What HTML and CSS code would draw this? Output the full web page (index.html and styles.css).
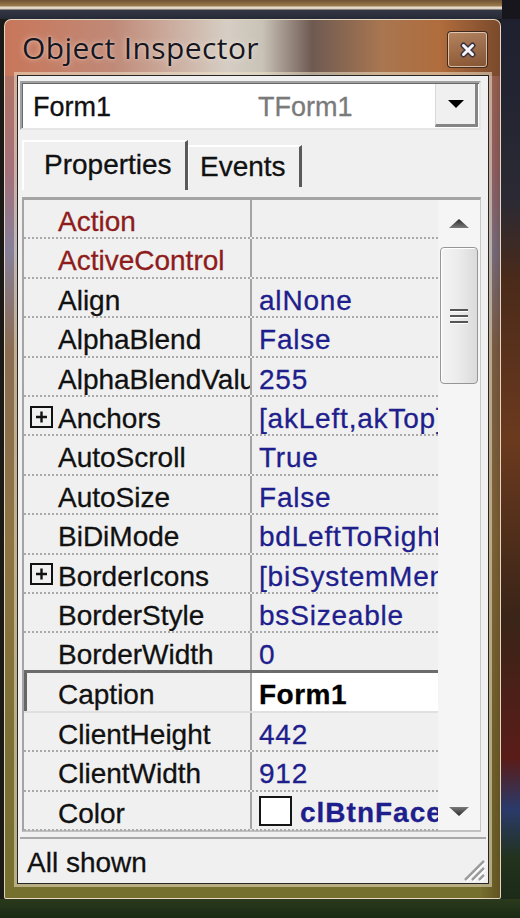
FILE: index.html
```html
<!DOCTYPE html>
<html lang="en">
<head>
<meta charset="utf-8">
<title>Object Inspector</title>
<link rel="stylesheet" href="styles.css">
</head>
<body>
<div class="screen">
  <div class="upper"><div class="upper-win"></div></div>
  <div class="main">
    <div class="window">
      <div class="titlebar">
        <span class="title">Object Inspector</span>
        <button class="close" aria-label="Close">
          <svg width="18" height="16" viewBox="0 0 18 16"><path d="M4.5 3.5 L13.5 12.5 M13.5 3.5 L4.5 12.5" stroke="#3b3440" stroke-width="6" stroke-linecap="round"/><path d="M4.5 3.5 L13.5 12.5 M13.5 3.5 L4.5 12.5" stroke="#f6f6fa" stroke-width="3" stroke-linecap="round"/></svg>
        </button>
      </div>
      <div class="client">
        <div class="combo">
          <span class="combo-name">Form1</span>
          <span class="combo-type">TForm1</span>
          <span class="combo-btn"><svg width="16" height="8" viewBox="0 0 16 8"><polygon points="0,0 16,0 8,8" fill="#000"/></svg></span>
        </div>
        <div class="tabs">
          <div class="tab active">Properties</div>
          <div class="tab">Events</div>
        </div>
        <div class="grid">
          <div class="rows">
            <div class="row"><div class="name ref">Action</div><div class="val"></div></div>
            <div class="row"><div class="name ref">ActiveControl</div><div class="val"></div></div>
            <div class="row"><div class="name">Align</div><div class="val">alNone</div></div>
            <div class="row"><div class="name">AlphaBlend</div><div class="val">False</div></div>
            <div class="row"><div class="name">AlphaBlendValue</div><div class="val">255</div></div>
            <div class="row"><div class="name has-plus"><svg class="plus" width="23" height="22" viewBox="0 0 23 22"><rect x="1" y="1" width="21" height="20" fill="none" stroke="#111" stroke-width="2"/><path d="M6 11 H17 M11.5 5.5 V16.5" stroke="#111" stroke-width="2.4"/></svg>Anchors</div><div class="val">[akLeft,akTop]</div></div>
            <div class="row"><div class="name">AutoScroll</div><div class="val">True</div></div>
            <div class="row"><div class="name">AutoSize</div><div class="val">False</div></div>
            <div class="row"><div class="name">BiDiMode</div><div class="val">bdLeftToRight</div></div>
            <div class="row"><div class="name has-plus"><svg class="plus" width="23" height="22" viewBox="0 0 23 22"><rect x="1" y="1" width="21" height="20" fill="none" stroke="#111" stroke-width="2"/><path d="M6 11 H17 M11.5 5.5 V16.5" stroke="#111" stroke-width="2.4"/></svg>BorderIcons</div><div class="val">[biSystemMenu,biMinimize,biMaximize]</div></div>
            <div class="row"><div class="name">BorderStyle</div><div class="val">bsSizeable</div></div>
            <div class="row pre-sel"><div class="name">BorderWidth</div><div class="val">0</div></div>
            <div class="row sel"><div class="name">Caption</div><div class="val">Form1</div></div>
            <div class="row"><div class="name">ClientHeight</div><div class="val">442</div></div>
            <div class="row"><div class="name">ClientWidth</div><div class="val">912</div></div>
            <div class="row"><div class="name">Color</div><div class="val color-val"><span class="swatch"></span><b>clBtnFace</b></div></div>
          </div>
          <div class="scrollbar">
            <div class="sb-btn"><svg width="20" height="9" viewBox="0 0 20 9"><defs><linearGradient id="ga" x1="0" y1="0" x2="0" y2="1"><stop offset="0" stop-color="#2a2a2a"/><stop offset="1" stop-color="#7a7a7a"/></linearGradient></defs><polygon points="0,9 10,0 20,9" fill="url(#ga)"/></svg></div>
            <div class="sb-track">
              <div class="thumb"><span class="grip"></span><span class="grip"></span><span class="grip"></span></div>
            </div>
            <div class="sb-btn down"><svg width="20" height="9" viewBox="0 0 20 9"><defs><linearGradient id="gb" x1="0" y1="0" x2="0" y2="1"><stop offset="0" stop-color="#7a7a7a"/><stop offset="1" stop-color="#2a2a2a"/></linearGradient></defs><polygon points="0,0 20,0 10,9" fill="url(#gb)"/></svg></div>
          </div>
        </div>
        <div class="status">
          <span class="status-text">All shown</span>
          <svg class="grip-corner" width="27" height="27" viewBox="0 0 27 27"><path d="M25 6 L6 25 M25 13 L13 25 M25 20 L20 25" stroke="#9c9c9c" stroke-width="2.5"/><path d="M26.5 7.5 L7.5 26.5 M26.5 14.5 L14.5 26.5 M26.5 21.5 L21.5 26.5" stroke="#ffffff" stroke-width="1.5"/></svg>
        </div>
      </div>
    </div>
    <div class="desk-right"></div>
  </div>
  <div class="lower"></div>
</div>
</body>
</html>
```

FILE: styles.css
```css
* { box-sizing: border-box; }
html, body { margin: 0; padding: 0; }
body {
  width: 520px;
  height: 918px;
  overflow: hidden;
  background: #1c1a16;
  font-family: "Liberation Sans", Arial, sans-serif;
}
.screen { width: 520px; height: 918px; display: flex; flex-direction: column; }

.upper { height: 19px; display: flex; background: #17161c; flex: none; }
.upper-win {
  width: 502px; height: 19px;
  background: linear-gradient(to bottom, #6e5232 0, #9b7a4e 6px, #e8dfcf 7px, #d8cfbf 9px, #343644 10px, #262a36 19px);
}
.main { height: 880px; display: flex; flex: none; }
.desk-right {
  flex: 1;
  background: linear-gradient(to bottom, #1e2030 0, #2b2a34 180px, #4a2a1a 260px, #6b3a1e 420px, #3a2418 600px, #5a1c18 740px, #2a3a6a 790px, #22321c 840px, #1c2a18 880px);
}
.lower { flex: 1; background: linear-gradient(to bottom, #2b3a1c, #1a2a14); }

.window {
  margin-left: 4px;
  width: 497px;
  height: 880px;
  border: 1px solid rgba(238, 226, 208, 0.9);
  border-radius: 7px 7px 2px 2px;
  display: flex;
  flex-direction: column;
  background:
    linear-gradient(90deg, #c8765a 0%, #c08a78 22%, #d6cec4 45%, #c9c2b6 52%, #6e5a52 62%, #a87650 76%, #b06c3c 88%, #7a4a2c 100%) top / 100% 56px no-repeat,
    linear-gradient(90deg, rgba(0,0,0,0) 0, rgba(0,0,0,0) 96%, rgba(60,30,10,0.35) 100%),
    linear-gradient(to bottom, #b87458 0, #a4707a 150px, #86809a 230px, #8a6c52 330px, #8e7442 520px, #7c7034 720px, #76702e 880px);
}
.titlebar {
  height: 55px;
  flex: none;
  display: flex;
  justify-content: space-between;
  align-items: flex-start;
  padding-left: 17px;
}
.title {
  font-family: "Open Sans", "Liberation Sans", sans-serif;
  font-size: 30px;
  letter-spacing: 0.4px;
  line-height: 55px;
  color: #16161f;
  text-shadow: 0 0 6px rgba(255, 245, 235, 0.55), 0 0 2px rgba(255, 245, 235, 0.5);
}
.close {
  width: 41px;
  height: 37px;
  margin: 11px 12px 0 0;
  padding: 0;
  border: 1px solid rgba(55, 35, 25, 0.9);
  border-radius: 4px;
  box-shadow: inset 0 0 0 1px rgba(240, 220, 200, 0.75);
  background: linear-gradient(to bottom, rgba(190, 150, 120, 0.6), rgba(130, 85, 55, 0.6));
  display: flex;
  align-items: center;
  justify-content: center;
}

.client {
  margin: 0 11px 14px 12px;
  width: 472px;
  height: 809px;
  flex: none;
  border: 1px solid #262626;
  background: #f0f0f0;
  box-shadow: 0 0 0 3px rgba(236, 226, 200, 0.55);
  display: flex;
  flex-direction: column;
  color: #111;
  font-size: 28px;
  -webkit-text-stroke: 0.3px currentColor;
}

.combo {
  margin: 5px 7px 0 2px;
  height: 49px;
  flex: none;
  background: #fff;
  border-top: 2px solid #a0a0a0;
  border-left: 2px solid #a0a0a0;
  border-right: 2px solid #e6e6e6;
  border-bottom: 2px solid #e6e6e6;
  box-shadow: inset 1px 1px 0 #6a6a6a;
  display: flex;
  align-items: center;
  font-size: 27px;
}
.combo-name { width: 236px; padding-left: 11px; padding-top: 3px; color: #111; }
.combo-type { flex: 1; padding-top: 3px; color: #7a7a7a; }
.combo-btn {
  width: 43px;
  height: 43px;
  margin-right: 1px;
  align-self: flex-start;
  margin-top: 1px;
  background: #f0f0f0;
  border-left: 1px solid #d8d8d8;
  border-right: 3px solid #858585;
  border-bottom: 3px solid #858585;
  display: flex;
  align-items: center;
  justify-content: center;
}

.tabs {
  height: 67px;
  flex: none;
  display: flex;
  align-items: flex-start;
  padding: 10px 0 0 4px;
}
.tab {
  height: 42px;
  margin-top: 5px;
  width: 114px;
  padding-left: 11px;
  border-top: 2px solid #fff;
  border-left: 1px solid #fff;
  border-right: 3px solid #5a5a5a;
  line-height: 40px;
  font-size: 28px;
  color: #111;
}
.tab.active {
  height: 50px;
  margin-top: 0;
  width: 166px;
  padding-left: 20px;
  border-left: 2px solid #fff;
  line-height: 46px;
}

.grid {
  margin-left: 4px;
  width: 459px;
  height: 635.4px;
  flex: none;
  display: flex;
  border-top: 3px solid #a4a4a4;
  border-left: 2px solid #a4a4a4;
  border-right: 1px solid #c8c8c8;
  border-bottom: 2px solid #c0c0c0;
}
.rows { width: 414px; flex: none; }
.row {
  height: 39.4px;
  display: grid;
  grid-template-columns: 228px 186px;
  border-bottom: 2px dotted #a9a9a9;
  line-height: 37px;
  white-space: nowrap;
}
.name {
  padding-left: 34px;
  padding-top: 3px;
  border-right: 2px solid #a4a4a4;
  overflow: hidden;
  display: flex;
  align-items: flex-start;
  color: #111;
}
.name.ref { color: #8e1c1c; }
.name.has-plus { padding-left: 6px; }
.plus { flex: none; margin-right: 5px; align-self: center; margin-top: -1px; }
.val {
  padding-left: 7px;
  padding-top: 3px;
  overflow: hidden;
  color: #1e1e8c;
  letter-spacing: 0.8px;
}
.row.pre-sel { border-bottom: 3px solid #6c6c6c; }
.row.sel { border-bottom: 2px solid #e0e0e0; height: 40.4px; }
.row.sel .name { border-left: 3px solid #666; padding-left: 31px; }
.row.sel .val { background: #fff; color: #000; font-weight: bold; letter-spacing: 0.5px; }
.color-val { display: flex; align-items: center; padding-top: 0; }
.swatch {
  flex: none;
  width: 33px;
  height: 30px;
  border: 2px solid #151515;
  background: #fff;
  margin-right: 8px;
}
.color-val b { font-weight: bold; color: #1e1e8c; letter-spacing: 1px; padding-top: 3px; }

.scrollbar {
  flex: 1;
  background: #f5f5f5;
  display: flex;
  flex-direction: column;
}
.sb-btn { height: 43px; flex: none; display: flex; align-items: center; justify-content: center; padding-top: 3px; }
.sb-btn.down { padding-top: 5px; }
.sb-track { flex: 1; }
.thumb {
  margin: 4px 2px 0 2px;
  height: 137px;
  border: 1px solid #969696;
  border-radius: 4px;
  background: linear-gradient(90deg, #f4f4f4 0%, #ebebeb 50%, #dadada 100%);
  box-shadow: inset 1px 1px 0 #fff;
  display: flex;
  flex-direction: column;
  align-items: center;
  justify-content: center;
  gap: 4px;
}
.grip {
  width: 18px;
  height: 2px;
  background: #555;
  box-shadow: 0 1px 0 #fff;
}

.status {
  margin: 4.6px 2px 0 2px;
  flex: 1;
  border-top: 2px solid #a8a8a8;
  display: flex;
  justify-content: space-between;
  align-items: flex-end;
  padding-left: 7px;
}
.status-text { align-self: center; padding-top: 4px; color: #111; }
.grip-corner { margin-bottom: 1px; }
```
